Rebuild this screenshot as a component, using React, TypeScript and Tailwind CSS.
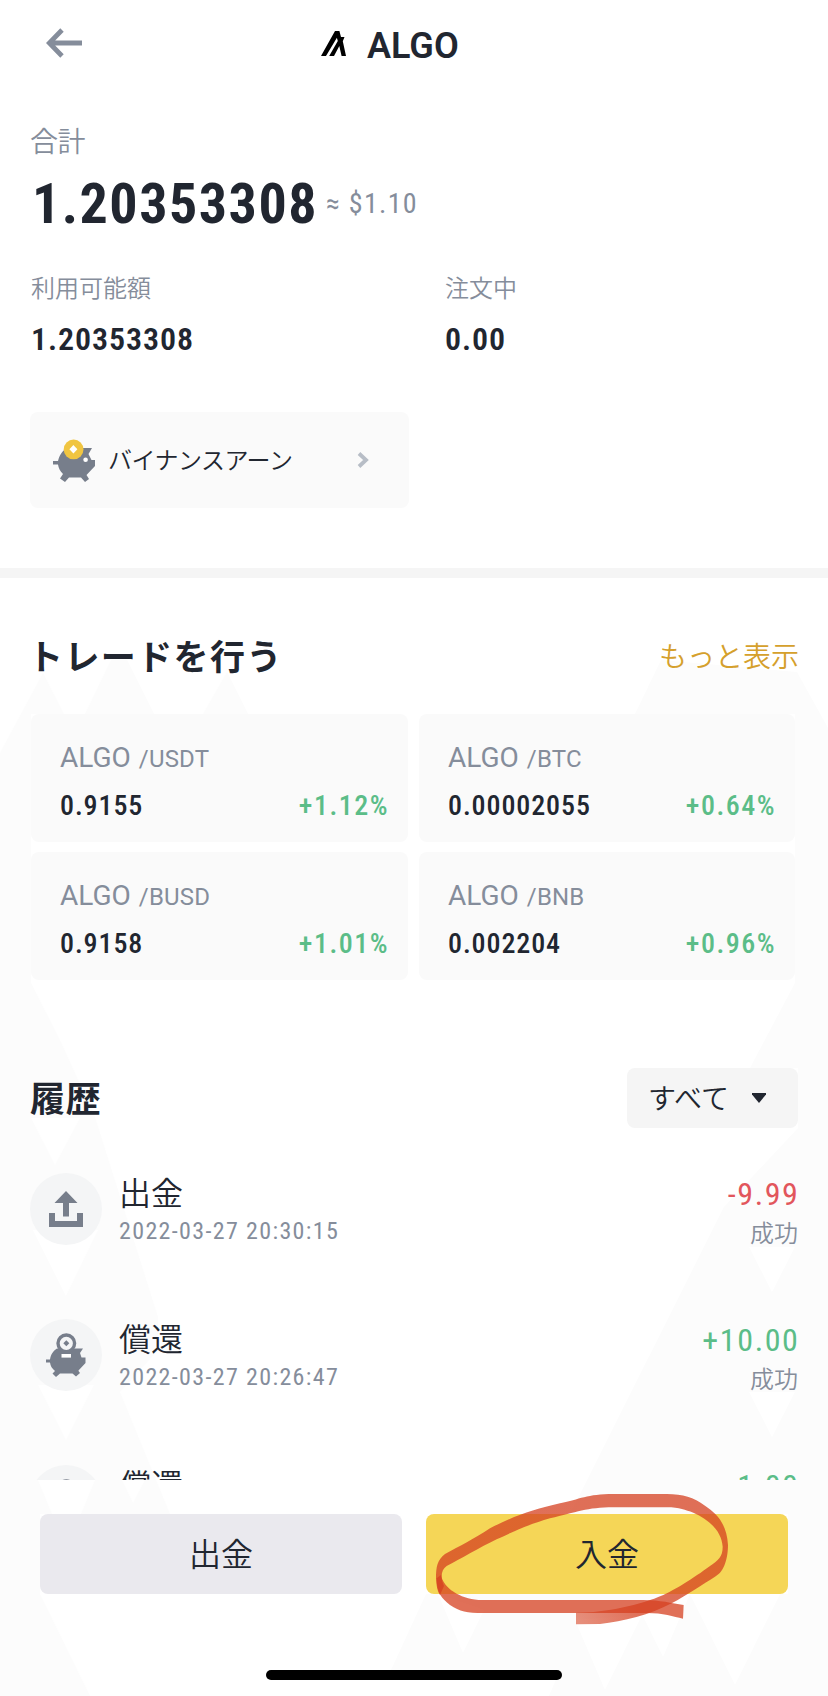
import React from "react";

const JP = "font-['Noto_Sans_CJK_JP','Noto_Sans',sans-serif]";

type Pair = { quote: string; price: string; change: string };
type Entry = { kind: "withdraw" | "redeem"; title: string; date?: string; amount: string; status?: string; tone: string };

const pairs: Pair[] = [
  { quote: "/USDT", price: "0.9155", change: "+1.12%" },
  { quote: "/BTC", price: "0.00002055", change: "+0.64%" },
  { quote: "/BUSD", price: "0.9158", change: "+1.01%" },
  { quote: "/BNB", price: "0.002204", change: "+0.96%" },
];

const entries: Entry[] = [
  { kind: "withdraw", title: "出金", date: "2022-03-27 20:30:15", amount: "-9.99", status: "成功", tone: "text-[#e2565c]" },
  { kind: "redeem", title: "償還", date: "2022-03-27 20:26:47", amount: "+10.00", status: "成功", tone: "text-[#5bbd88]" },
  { kind: "redeem", title: "償還", amount: "1.00", tone: "text-[#5bbd88]" },
];

function Backdrop() {
  return (
    <svg className="absolute inset-0 -z-10" width="828" height="1696" viewBox="0 0 828 1696" fill="none">
      <g fill="#fcfcfc">
        <path d="M0 753L43 673L64 714H31V983L60 1040L95 1117L158 1317V1350L120 1392L170 1514H0Z" />
        <path d="M111 660H127L154 714H85ZM227 672L248 714H203Z" />
        <path d="M635 714L661 660L797 672L828 728V1514H570L724 1207L798 1128V1068H750L795 983V714Z" />
        <path d="M0 1514H40V1594L90 1696H0Z" />
        <path d="M788 1514H828V1696H549L560 1670H391L426 1594H788Z" />
      </g>
      <g fill="#fff">
        <path d="M31 1118H80L55 1165ZM33 1230H98L66 1296ZM38 1385H94L66 1440Z" />
        <path d="M38 1480H95L81 1514H52ZM122 1480H145L133 1503Z" />
        <path d="M749 1247H795L772 1292ZM749 1392H795L772 1437Z" />
        <path d="M438 1594L463 1653L484 1610ZM575 1620L605 1690L642 1615ZM640 1610L663 1657L690 1594ZM690 1594L735 1685L780 1594Z" />
      </g>
    </svg>
  );
}

function AlgoLogo() {
  return (
    <svg width="26" height="26" viewBox="0 0 26 26" fill="#000">
      <path d="M0 25L14 0H18.4L20 6H23.5L21.8 10.3L25 25H20.6L18.3 15L13 25H8.2L16.8 10L15.9 6.8L5 25Z" />
    </svg>
  );
}

function EarnIcon() {
  return (
    <svg width="43" height="43" viewBox="0 0 43 43">
      <path fill="#777e8b" d="M0 22H5C6 17 9 12 14 9H39L35.5 15L38.5 21H42V27L33.5 36L36 40L32 43L28 38.5H16L12 43L7 39.5L10 35C7 32 5.5 29 5 25.5H0Z" />
      <circle cx="32.6" cy="20.8" r="2.3" fill="#fff" />
      <circle cx="20.6" cy="10.4" r="9.9" fill="#f0c541" />
      <path d="M20.4 6L24.4 10.2L20.4 14.4L16.4 10.2Z" fill="#fff" />
    </svg>
  );
}

function WithdrawIcon() {
  return (
    <svg width="36" height="38" viewBox="0 0 36 38" fill="#777e8b">
      <path d="M18 1L29.5 13H21V26.5H15V13H6.5ZM1 23H7V31H29V23H35V37H1Z" />
    </svg>
  );
}

function RedeemIcon() {
  return (
    <svg width="40" height="44" viewBox="0 0 40 44">
      <path fill="#777e8b" d="M0 26.5H4C5 21 7 18 11 15.5H37L34 20L35.5 24.5H39.5V30L32.5 37.5V38L34 40L30 43.5L26.5 40.5H14L10 44L6.5 40.5L9 38C6 35.5 4.5 33 4 29.5H0Z" />
      <circle cx="20.3" cy="10.3" r="8.3" fill="#f4f5f6" stroke="#777e8b" strokeWidth="3.4" />
      <path d="M20.3 7.3L23.3 10.3L20.3 13.3L17.3 10.3Z" fill="#777e8b" />
      <rect x="15.5" y="21" width="9.5" height="3.6" fill="#fff" />
    </svg>
  );
}

function Scribble() {
  return (
    <svg className="pointer-events-none absolute left-[400px] top-[-20px]" width="428" height="200" viewBox="0 0 1284 600">
      <defs>
        <radialGradient id="stroke" gradientUnits="userSpaceOnUse" cx="530" cy="480" r="200">
          <stop offset="0" stopColor="#d54020" stopOpacity="0.58" />
          <stop offset="1" stopColor="#d54020" stopOpacity="0.75" />
        </radialGradient>
      </defs>
      <path
        fill="url(#stroke)"
        d="M528 493L600 492C670 485 750 464 815 430C860 405 910 372 945 350C975 335 984 290 984 255C980 190 950 160 915 137C880 112 850 102 800 102L640 102C560 102 540 118 480 130C400 148 340 168 270 205C220 238 180 258 135 282C112 300 108 320 108 355C110 385 114 397 120 405L132 378C127 366 125 358 125 350C125 335 130 325 140 318C180 298 240 262 290 238C370 200 400 190 450 175C530 157 560 142 640 142L800 142C840 142 855 150 880 158C930 180 965 215 968 260C968 290 955 300 930 318C880 355 820 392 790 405C720 435 620 458 528 458Z"
      />
      <path
        fill="#d54020"
        fillOpacity="0.75"
        d="M110 355C110 400 125 415 150 435C180 455 200 459 250 459L740 459C790 459 820 470 849 476L851 435C815 430 780 420 730 420L235 420C180 415 130 385 123 345Z"
      />
    </svg>
  );
}

export default function App() {
  return (
    <div className="relative isolate flex h-[1696px] w-[828px] flex-col overflow-hidden bg-white font-['Roboto',sans-serif] font-stretch-[75%] text-[#212630]">
      <Backdrop />

      <header className="flex h-[90px] shrink-0 items-center">
        <svg className="ml-[46px] mt-[-4px] shrink-0" width="36" height="30" viewBox="0 0 36 30" fill="none" stroke="#858d9b" strokeWidth="4.8">
          <path d="M16 2L3.3 15L16 28M3 15H36" />
        </svg>
        <div className="ml-[239px] flex items-center">
          <div className="mt-[-3px]"><AlgoLogo /></div>
          <h1 className="ml-5 mt-[2px] text-[36px] leading-10 font-semibold font-stretch-normal">ALGO</h1>
        </div>
      </header>

      <section className="h-[478px] shrink-0 px-[30px] pt-8">
        <p className={`${JP} text-[28px] leading-9 font-[350] tracking-[-0.5px] text-[#858d9b]`}>合計</p>
        <div className="mt-[14px] flex h-16 items-center">
          <span className="ml-0.5 text-[56px] leading-[64px] font-bold tracking-[1.5px]">1.20353308</span>
          <span className="ml-2 text-[28px] leading-9 tracking-[1.3px] text-[#858d9b]">≈ $1.10</span>
        </div>
        <div className="mt-[35px] grid grid-cols-2">
          <div className="pl-px">
            <p className={`${JP} text-2xl leading-8 font-[350] text-[#858d9b]`}>利用可能額</p>
            <p className="mt-4 text-[32px] leading-10 font-semibold tracking-[0.9px]">1.20353308</p>
          </div>
          <div className="pl-[31px]">
            <p className={`${JP} text-2xl leading-8 font-[350] text-[#858d9b]`}>注文中</p>
            <p className="mt-4 text-[32px] leading-10 font-semibold tracking-[0.9px]">0.00</p>
          </div>
        </div>
        <button className="mt-[53px] flex h-[96px] w-[379px] items-center rounded-lg bg-[#fafafa] pl-[23px]">
          <EarnIcon />
          <span className={`${JP} ml-3 mt-[-2px] text-2xl leading-8 font-[350] tracking-[-0.5px]`}>バイナンスアーン</span>
          <svg className="ml-auto mr-[40px]" width="12" height="16" viewBox="0 0 12 16" fill="none" stroke="#b7bdc6" strokeWidth="3.8">
            <path d="M2 1.5L9 8L2 14.5" />
          </svg>
        </button>
      </section>

      <div className="h-[10px] shrink-0 bg-[#f5f5f5]" />

      <section className="shrink-0 pt-[53px]">
        <div className="flex h-12 items-center justify-between pl-[28px] pr-[29px]">
          <h2 className={`${JP} text-[35px] leading-[48px] font-bold tracking-[1.4px]`}>トレードを行う</h2>
          <a className={`${JP} text-[28px] leading-9 font-[350] text-[#d5a02c]`}>もっと表示</a>
        </div>
        <div className="mx-[31px] mt-[35px] grid grid-cols-[377px_376px] gap-x-[11px] gap-y-[10px]">
          {pairs.map((p) => (
            <div key={p.quote} className="h-32 rounded-lg bg-[#fafafa] pl-[29px] pr-[19px] pt-6">
              <p className="flex items-baseline leading-10 font-stretch-normal text-[#858d9b]">
                <span className="text-[28px]">ALGO</span>
                <span className="ml-[8px] text-2xl tracking-[0.2px]">{p.quote}</span>
              </p>
              <p className="mt-2 flex justify-between text-[28px] leading-10 font-medium">
                <span className="tracking-[0.9px]">{p.price}</span>
                <span className="tracking-[1.5px] text-[#5bbd88]">{p.change}</span>
              </p>
            </div>
          ))}
        </div>
      </section>

      <section className="mt-[88px] h-[412px] shrink-0 overflow-hidden">
        <div className="flex h-[60px] items-center justify-between px-[30px]">
          <h2 className={`${JP} mt-[-2px] text-[35px] leading-[48px] font-bold tracking-[0.8px]`}>履歴</h2>
          <button className={`${JP} flex h-[60px] w-[171px] items-center rounded-lg bg-[#f5f5f5] pl-[21px] text-[28px] leading-9 font-[350]`}>
            <span className="mt-[-3px]">すべて</span>
            <svg className="ml-[23px]" width="14" height="10" viewBox="0 0 14 10" fill="#212630">
              <path d="M0 0H14V1.5L7 10L0 1.5Z" />
            </svg>
          </button>
        </div>
        <ul className="mt-[43px]">
          {entries.map((e, i) => (
            <li key={i} className="flex h-[146px] px-[30px]">
              <div className="mt-[2px] flex size-[72px] items-center justify-center rounded-full bg-[#f4f5f6]">
                {e.kind === "withdraw" ? <WithdrawIcon /> : <RedeemIcon />}
              </div>
              <div className="ml-[17px]">
                <p className={`${JP} text-[32px] leading-10 font-[350]`}>{e.title}</p>
                {e.date && <p className="mt-1 text-2xl leading-8 tracking-[1.35px] text-[#858d9b]">{e.date}</p>}
              </div>
              <div className="ml-auto text-right">
                <p className={`mr-[-1.5px] mt-[3px] text-[32px] leading-10 tracking-[1.6px] ${e.tone}`}>{e.amount}</p>
                {e.status && <p className={`${JP} mt-[2px] text-2xl leading-8 font-[350] text-[#858d9b]`}>{e.status}</p>}
              </div>
            </li>
          ))}
        </ul>
      </section>

      <footer className="relative flex h-[216px] shrink-0 flex-col items-center">
        <div className="mt-[34px] flex w-full gap-6 px-10">
          <button className={`${JP} h-20 flex-1 rounded-lg bg-[#eae9ee] pb-1 text-[32px] font-[350]`}>出金</button>
          <button className={`${JP} h-20 flex-1 rounded-lg bg-[#f5d657] pb-1 text-[32px] font-[350]`}>入金</button>
        </div>
        <div className="mt-[76px] h-[10px] w-[296px] rounded-full bg-black" />
        <Scribble />
      </footer>
    </div>
  );
}
